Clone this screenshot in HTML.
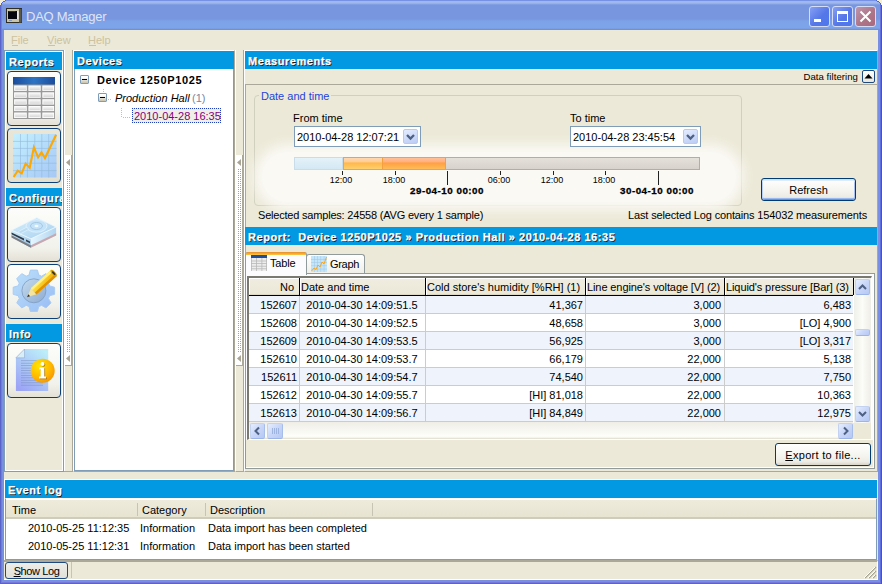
<!DOCTYPE html>
<html><head><meta charset="utf-8">
<style>
*{box-sizing:border-box;margin:0;padding:0}
html,body{width:882px;height:584px;overflow:hidden;background:#ECE9D8}
body{position:relative;font:11px "Liberation Sans",sans-serif;color:#000}
.a{position:absolute}
.t{position:absolute;white-space:pre;line-height:13px}
.hdr{position:absolute;background:#0398E2;color:#fff;font:bold 11px/1 "Liberation Sans",sans-serif;letter-spacing:0.55px;text-shadow:1px 1px 0 #1a1a1a;-webkit-text-stroke:0.25px #fff;overflow:hidden}
.hdr span{position:absolute;left:3px;top:5px;white-space:pre}
.hdr.lo span{top:5px}
.xpbtn{position:absolute;border:1px solid #003C74;border-radius:3px;background:linear-gradient(#fff 0%,#F4F3EE 60%,#ECEBE4 85%,#D8D2C6 100%)}
.sbtn{position:absolute;border:1px solid #0C3E78;border-radius:4px;background:linear-gradient(#FDFDFB,#F2F2EC 75%,#E4E1D6)}
.sbtn.sel{background:linear-gradient(#E9E6D8,#E3E0D0)}
.sarrow{position:absolute;border-radius:2px;border:1px solid #C4D2F2;border-bottom-color:#9CB4E6;border-right-color:#A8BEEA;background:linear-gradient(135deg,#E6EEFE,#C8D6F8 50%,#B6C8F4)}
</style></head><body>
<div class="a" style="left:0;top:0;width:882px;height:584px;background:#7890E0;border:1px solid #5A64C8;border-top:none"></div>
<div class="a" style="left:1px;top:30px;width:880px;height:553px;border:1px solid #7878D8;border-top:none;border-right-color:#6070D8"></div>
<div class="a" style="left:881px;top:30px;width:1px;height:554px;background:#4A50C0"></div>
<div class="a" style="left:3px;top:30px;width:876px;height:551px;background:#7890E4"></div>
<div class="a" style="left:0;top:0;width:882px;height:30px;background:linear-gradient(#4E6ADA 0px,#A0B8EE 1px,#A0B8EE 3px,#7896DF 5px,#7896DF 19px,#7DA2E8 21px,#7EA4E8 28px,#6C88DE 30px)"></div>
<div class="a" style="left:0px;top:0px;width:5px;height:1px;background:#F4EFD6"></div><div class="a" style="left:877px;top:0px;width:5px;height:1px;background:#F4EFD6"></div><div class="a" style="left:0px;top:1px;width:3px;height:1px;background:#F4EFD6"></div><div class="a" style="left:879px;top:1px;width:3px;height:1px;background:#F4EFD6"></div><div class="a" style="left:0px;top:2px;width:2px;height:1px;background:#F4EFD6"></div><div class="a" style="left:880px;top:2px;width:2px;height:1px;background:#F4EFD6"></div><div class="a" style="left:0px;top:3px;width:1px;height:1px;background:#F4EFD6"></div><div class="a" style="left:881px;top:3px;width:1px;height:1px;background:#F4EFD6"></div><div class="a" style="left:0px;top:4px;width:1px;height:1px;background:#F4EFD6"></div><div class="a" style="left:881px;top:4px;width:1px;height:1px;background:#F4EFD6"></div><div class="a" style="left:5px;top:0px;width:1px;height:1px;background:#4A66D8"></div><div class="a" style="left:876px;top:0px;width:1px;height:1px;background:#4A66D8"></div><div class="a" style="left:3px;top:1px;width:1px;height:1px;background:#4A66D8"></div><div class="a" style="left:878px;top:1px;width:1px;height:1px;background:#4A66D8"></div><div class="a" style="left:4px;top:1px;width:1px;height:1px;background:#4A66D8"></div><div class="a" style="left:877px;top:1px;width:1px;height:1px;background:#4A66D8"></div><div class="a" style="left:2px;top:2px;width:1px;height:1px;background:#4A66D8"></div><div class="a" style="left:879px;top:2px;width:1px;height:1px;background:#4A66D8"></div><div class="a" style="left:1px;top:3px;width:1px;height:1px;background:#4A66D8"></div><div class="a" style="left:880px;top:3px;width:1px;height:1px;background:#4A66D8"></div><div class="a" style="left:1px;top:4px;width:1px;height:1px;background:#4A66D8"></div><div class="a" style="left:880px;top:4px;width:1px;height:1px;background:#4A66D8"></div>
<div class="a" style="left:0;top:5px;width:1px;height:25px;background:#5A64C8"></div>
<div class="a" style="left:1px;top:5px;width:1px;height:25px;background:#7A7CD8"></div>
<div class="a" style="left:881px;top:5px;width:1px;height:25px;background:#4A50C0"></div>
<div class="a" style="left:880px;top:5px;width:1px;height:25px;background:#6A74D8"></div>
<svg class="a" style="left:6px;top:8px" width="16" height="15"><rect x="0.5" y="0.5" width="15" height="14" fill="#C9C5AA" stroke="#2E2E24"/><rect x="13" y="1" width="2.5" height="13.5" fill="#5A5848"/><rect x="2" y="3" width="9" height="8" fill="#05050E"/><rect x="2.5" y="3" width="7" height="1" fill="#1A2A8A"/><rect x="11" y="3" width="1.5" height="8" fill="#E8E8F4"/><rect x="3" y="12" width="3" height="1" fill="#7A9AC8"/></svg>
<div class="t" style="left:26px;top:10px;font:13px/1 'Liberation Sans',sans-serif;letter-spacing:-0.25px;color:#DCE6F8">DAQ Manager</div>
<div class="a" style="left:809px;top:6px;width:21px;height:21px;border:1px solid #D4DCF6;border-radius:3px;background:linear-gradient(135deg,#86A0F2,#5577E8 55%,#4D78EE)"></div>
<div class="a" style="left:832px;top:6px;width:21px;height:21px;border:1px solid #D4DCF6;border-radius:3px;background:linear-gradient(135deg,#86A0F2,#5577E8 55%,#4D78EE)"></div>
<div class="a" style="left:855px;top:6px;width:21px;height:21px;border:1px solid #D4DCF6;border-radius:3px;background:linear-gradient(135deg,#BC96AE,#AE7488 55%,#A86A7E)"></div>
<div class="a" style="left:814px;top:19px;width:7px;height:3px;background:#fff"></div>
<div class="a" style="left:837px;top:11px;width:11px;height:11px;border:1px solid #fff;border-top-width:3px"></div>
<svg class="a" style="left:855px;top:6px" width="21" height="21"><path d="M5.5 5.5 L15.5 15.5 M15.5 5.5 L5.5 15.5" stroke="#fff" stroke-width="2"/></svg>
<div class="a" style="left:4px;top:30px;width:874px;height:550px;background:#ECE9D8"></div>
<div class="t" style="left:11px;top:34px;color:#CDC29E">File</div>
<div class="a" style="left:12px;top:45px;width:6px;height:1px;background:#CDC29E"></div>
<div class="t" style="left:47px;top:34px;color:#CDC29E">View</div>
<div class="a" style="left:48px;top:45px;width:7px;height:1px;background:#CDC29E"></div>
<div class="t" style="left:88px;top:34px;color:#CDC29E">Help</div>
<div class="a" style="left:89px;top:45px;width:7px;height:1px;background:#CDC29E"></div>
<div class="a" style="left:4px;top:50px;width:60px;height:422px;border:1px solid #7F9DB9"></div>
<div class="a" style="left:5px;top:51px;width:58px;height:420px;border:1px solid #fff"></div>
<div class="hdr lo" style="left:6px;top:52px;width:56px;height:18px"><span>Reports</span></div>
<div class="hdr lo" style="left:6px;top:188px;width:56px;height:18px"><span>Configuration</span></div>
<div class="hdr lo" style="left:6px;top:324px;width:56px;height:18px"><span>Info</span></div>
<div class="sbtn" style="left:7px;top:71px;width:54px;height:55px"></div>
<div class="sbtn sel" style="left:7px;top:128px;width:54px;height:55px"></div>
<div class="sbtn" style="left:7px;top:207px;width:54px;height:55px"></div>
<div class="sbtn" style="left:7px;top:264px;width:54px;height:55px"></div>
<div class="sbtn" style="left:7px;top:343px;width:54px;height:55px"></div>
<svg class="a" style="left:0;top:0" width="70" height="400"><defs><linearGradient id="hb" x1="0" x2="1"><stop offset="0" stop-color="#1B4C9C"/><stop offset=".5" stop-color="#2E74C4"/><stop offset="1" stop-color="#1B4C9C"/></linearGradient><linearGradient id="cg" x1="0" y1="0" x2="0" y2="1"><stop offset="0" stop-color="#F6F6F6"/><stop offset="1" stop-color="#D6D6D6"/></linearGradient><linearGradient id="chbg" x1="0" y1="0" x2="1" y2="1"><stop offset="0" stop-color="#C4F0FF"/><stop offset="1" stop-color="#A6C8F6"/></linearGradient><linearGradient id="doc" x1="0.8" y1="0" x2="0.2" y2="1"><stop offset="0" stop-color="#BCEEFA"/><stop offset=".5" stop-color="#ACC8F6"/><stop offset="1" stop-color="#9CA4F6"/></linearGradient><radialGradient id="inf" cx=".35" cy=".3" r=".8"><stop offset="0" stop-color="#FFE600"/><stop offset=".6" stop-color="#FFB800"/><stop offset="1" stop-color="#F59000"/></radialGradient><linearGradient id="hddtop" x1="0" y1="0" x2="1" y2="1"><stop offset="0" stop-color="#D8F0FA"/><stop offset="1" stop-color="#A8D0F0"/></linearGradient><linearGradient id="pen" x1="0" y1="0" x2="1" y2="1"><stop offset="0" stop-color="#FFE84A"/><stop offset="1" stop-color="#F0A800"/></linearGradient></defs><rect x="13" y="77" width="42" height="8" fill="url(#hb)"/><rect x="13" y="84.5" width="42" height="34.5" fill="#999"/><rect x="14.1" y="85.5" width="12.7" height="5.4" fill="#fff"/><rect x="15.1" y="86.3" width="10.9" height="3.8" fill="url(#cg)"/><rect x="28.4" y="85.5" width="12.3" height="5.4" fill="#fff"/><rect x="29.4" y="86.3" width="10.5" height="3.8" fill="url(#cg)"/><rect x="42.3" y="85.5" width="11.8" height="5.4" fill="#fff"/><rect x="43.3" y="86.3" width="10.0" height="3.8" fill="url(#cg)"/><rect x="14.1" y="92.3" width="12.7" height="5.5" fill="#fff"/><rect x="15.1" y="93.1" width="10.9" height="3.9" fill="url(#cg)"/><rect x="28.4" y="92.3" width="12.3" height="5.5" fill="#fff"/><rect x="29.4" y="93.1" width="10.5" height="3.9" fill="url(#cg)"/><rect x="42.3" y="92.3" width="11.8" height="5.5" fill="#fff"/><rect x="43.3" y="93.1" width="10.0" height="3.9" fill="url(#cg)"/><rect x="14.1" y="99.2" width="12.7" height="5.4" fill="#fff"/><rect x="15.1" y="100.0" width="10.9" height="3.8" fill="url(#cg)"/><rect x="28.4" y="99.2" width="12.3" height="5.4" fill="#fff"/><rect x="29.4" y="100.0" width="10.5" height="3.8" fill="url(#cg)"/><rect x="42.3" y="99.2" width="11.8" height="5.4" fill="#fff"/><rect x="43.3" y="100.0" width="10.0" height="3.8" fill="url(#cg)"/><rect x="14.1" y="106.0" width="12.7" height="5.1" fill="#fff"/><rect x="15.1" y="106.8" width="10.9" height="3.5" fill="url(#cg)"/><rect x="28.4" y="106.0" width="12.3" height="5.1" fill="#fff"/><rect x="29.4" y="106.8" width="10.5" height="3.5" fill="url(#cg)"/><rect x="42.3" y="106.0" width="11.8" height="5.1" fill="#fff"/><rect x="43.3" y="106.8" width="10.0" height="3.5" fill="url(#cg)"/><rect x="14.1" y="112.5" width="12.7" height="5.5" fill="#fff"/><rect x="15.1" y="113.3" width="10.9" height="3.9" fill="url(#cg)"/><rect x="28.4" y="112.5" width="12.3" height="5.5" fill="#fff"/><rect x="29.4" y="113.3" width="10.5" height="3.9" fill="url(#cg)"/><rect x="42.3" y="112.5" width="11.8" height="5.5" fill="#fff"/><rect x="43.3" y="113.3" width="10.0" height="3.9" fill="url(#cg)"/><rect x="13" y="134" width="43.5" height="43.5" fill="url(#chbg)"/><rect x="20.0" y="134" width="1" height="43.5" fill="#8FB6D8" opacity=".55"/><rect x="26.9" y="134" width="1" height="43.5" fill="#8FB6D8" opacity=".55"/><rect x="34.3" y="134" width="1" height="43.5" fill="#8FB6D8" opacity=".55"/><rect x="41.3" y="134" width="1" height="43.5" fill="#8FB6D8" opacity=".55"/><rect x="48.2" y="134" width="1" height="43.5" fill="#8FB6D8" opacity=".55"/><rect x="13" y="140.9" width="43.5" height="1" fill="#8FB6D8" opacity=".55"/><rect x="13" y="147.9" width="43.5" height="1" fill="#8FB6D8" opacity=".55"/><rect x="13" y="155.3" width="43.5" height="1" fill="#8FB6D8" opacity=".55"/><rect x="13" y="162.7" width="43.5" height="1" fill="#8FB6D8" opacity=".55"/><rect x="13" y="170.1" width="43.5" height="1" fill="#8FB6D8" opacity=".55"/><polyline points="13.7,177 17.7,170.7 21.7,173.5 25.6,163.6 29.7,167.8 33.9,147.4 38.1,157.4 41.5,152.5 45,158 56.1,134.7" fill="none" stroke="#FFA800" stroke-width="2.1"/><defs><linearGradient id="hddl" x1="0" y1="0" x2="0" y2="1"><stop offset="0" stop-color="#D4F0FC"/><stop offset="1" stop-color="#90B8DC"/></linearGradient><linearGradient id="hddr" x1="0" y1="0" x2="1" y2="0"><stop offset="0" stop-color="#E4F6FF"/><stop offset="1" stop-color="#B0D4F0"/></linearGradient></defs><polygon points="11.5,230.1 30.9,238.8 30.9,247.8 11.5,237.4" fill="url(#hddl)"/><polygon points="30.9,238.8 56.1,227 56.1,235.6 30.9,247.8" fill="url(#hddr)"/><polygon points="30.9,245.2 56.1,233.2 56.1,235.6 30.9,247.8" fill="#C8A8B0"/><polygon points="11.5,235.2 30.9,245.4 30.9,247.8 11.5,237.4" fill="#7C7C80"/><polygon points="11.5,232.5 24,238.6 24,240.4 11.5,234.3" fill="#2E3A48"/><polygon points="26,239.6 30,241.6 30,243.2 26,241.2" fill="#2E3A48"/><polygon points="11.5,230.1 36.8,217.5 56.1,227 30.9,238.8" fill="url(#hddtop)" stroke="#F0FAFF" stroke-width=".8" stroke-linejoin="round"/><ellipse cx="36.5" cy="226" rx="10.5" ry="6.2" fill="#C4E2F8" stroke="#E8F6FF" stroke-width=".7"/><ellipse cx="36.5" cy="226" rx="6" ry="3.5" fill="none" stroke="#9CC0DC" stroke-width=".8"/><ellipse cx="36.5" cy="226" rx="2" ry="1.2" fill="#F0FAFF"/><polygon points="18.5,231.5 27,227 28.5,229.5 20,234" fill="#BCDCF2" stroke="#E8F6FF" stroke-width=".6"/><defs><linearGradient id="gear" x1="0" y1="0" x2="1" y2="1"><stop offset="0" stop-color="#BCE0FA"/><stop offset="1" stop-color="#98BCF4"/></linearGradient><linearGradient id="gearc" x1="0" y1="0" x2="1" y2="1"><stop offset="0" stop-color="#C4DCF0"/><stop offset="1" stop-color="#8EAAD0"/></linearGradient></defs><polygon points="29.02,275.04 30.35,270.10 37.45,270.10 38.78,275.04 41.60,276.21 46.02,273.65 51.05,278.68 48.49,283.10 49.66,285.92 54.60,287.25 54.60,294.35 49.66,295.68 48.49,298.50 51.05,302.92 46.02,307.95 41.60,305.39 38.78,306.56 37.45,311.50 30.35,311.50 29.02,306.56 26.20,305.39 21.78,307.95 16.75,302.92 19.31,298.50 18.14,295.68 13.20,294.35 13.20,287.25 18.14,285.92 19.31,283.10 16.75,278.68 21.78,273.65 26.20,276.21" fill="url(#gear)" stroke="#A8CCF4" stroke-width="1" stroke-linejoin="round"/><circle cx="33.9" cy="290.8" r="12" fill="url(#gearc)" stroke="#7E9CC0" stroke-width=".8"/><g transform="translate(27,297.3) rotate(-42.1)"><polygon points="0,0 9,-4 9,4" fill="#F4E4A0"/><polygon points="0,0 3,-1.3 3,1.3" fill="#333"/><rect x="9" y="-4.2" width="27" height="8.4" fill="url(#pen)"/><rect x="9" y="-4.2" width="27" height="2.5" fill="#FFF080"/><rect x="9" y="1.8" width="27" height="2.4" fill="#E09000"/><ellipse cx="36" cy="0" rx="1.8" ry="4.2" fill="#D8A000"/><ellipse cx="36" cy="0" rx="1" ry="2.4" fill="#333"/></g><polygon points="24.5,349 48.2,349 48.2,391.1 15.9,391.1 15.9,357.8" fill="url(#doc)"/><polygon points="15.9,357.8 24.5,349 24.5,357.8" fill="#D8EEF8" stroke="#8AA4C8" stroke-width=".5"/><rect x="21" y="360.3" width="22" height="0.8" fill="#7A8EC0" opacity=".65"/><rect x="21" y="362.8" width="22" height="0.8" fill="#7A8EC0" opacity=".65"/><rect x="21" y="365.2" width="22" height="0.8" fill="#7A8EC0" opacity=".65"/><rect x="21" y="367.7" width="22" height="0.8" fill="#7A8EC0" opacity=".65"/><rect x="21" y="370.1" width="22" height="0.8" fill="#7A8EC0" opacity=".65"/><rect x="21" y="372.6" width="22" height="0.8" fill="#7A8EC0" opacity=".65"/><rect x="21" y="375.0" width="22" height="0.8" fill="#7A8EC0" opacity=".65"/><rect x="21" y="377.4" width="22" height="0.8" fill="#7A8EC0" opacity=".65"/><rect x="21" y="379.9" width="22" height="0.8" fill="#7A8EC0" opacity=".65"/><rect x="21" y="382.4" width="22" height="0.8" fill="#7A8EC0" opacity=".65"/><rect x="21" y="384.8" width="22" height="0.8" fill="#7A8EC0" opacity=".65"/><circle cx="42.7" cy="370.8" r="12" fill="url(#inf)"/><path d="M40.3,368.3 h4.8 v9 h1.8 v2 h-7 v-2 h1.6 v-7 h-1.2z" fill="#7A4A00" opacity=".6"/><circle cx="43.3" cy="364.8" r="2" fill="#7A4A00" opacity=".6"/><path d="M39.5,367.5 h4.8 v9 h1.8 v2 h-7 v-2 h1.6 v-7 h-1.2z" fill="#fff"/><circle cx="42.5" cy="364" r="2" fill="#fff"/></svg>
<div class="a" style="left:65px;top:155px;width:7px;height:211px;background:#fff;border-right:1px solid #ACA899;border-bottom:1px solid #ACA899"></div>
<svg class="a" style="left:65px;top:155px" width="7" height="211"><polygon points="1,7.5 5,4 5,11" fill="#A8A594"/><polygon points="1,203.5 5,200 5,207" fill="#A8A594"/><rect x="2" y="14" width="1" height="1" fill="#A8A594"/><rect x="4" y="14" width="1" height="1" fill="#A8A594"/><rect x="2" y="16" width="1" height="1" fill="#A8A594"/><rect x="4" y="16" width="1" height="1" fill="#A8A594"/><rect x="2" y="18" width="1" height="1" fill="#A8A594"/><rect x="4" y="18" width="1" height="1" fill="#A8A594"/><rect x="2" y="20" width="1" height="1" fill="#A8A594"/><rect x="4" y="20" width="1" height="1" fill="#A8A594"/><rect x="2" y="22" width="1" height="1" fill="#A8A594"/><rect x="4" y="22" width="1" height="1" fill="#A8A594"/><rect x="2" y="24" width="1" height="1" fill="#A8A594"/><rect x="4" y="24" width="1" height="1" fill="#A8A594"/><rect x="2" y="26" width="1" height="1" fill="#A8A594"/><rect x="4" y="26" width="1" height="1" fill="#A8A594"/><rect x="2" y="28" width="1" height="1" fill="#A8A594"/><rect x="4" y="28" width="1" height="1" fill="#A8A594"/><rect x="2" y="30" width="1" height="1" fill="#A8A594"/><rect x="4" y="30" width="1" height="1" fill="#A8A594"/><rect x="2" y="32" width="1" height="1" fill="#A8A594"/><rect x="4" y="32" width="1" height="1" fill="#A8A594"/><rect x="2" y="34" width="1" height="1" fill="#A8A594"/><rect x="4" y="34" width="1" height="1" fill="#A8A594"/><rect x="2" y="36" width="1" height="1" fill="#A8A594"/><rect x="4" y="36" width="1" height="1" fill="#A8A594"/><rect x="2" y="38" width="1" height="1" fill="#A8A594"/><rect x="4" y="38" width="1" height="1" fill="#A8A594"/><rect x="2" y="40" width="1" height="1" fill="#A8A594"/><rect x="4" y="40" width="1" height="1" fill="#A8A594"/><rect x="2" y="42" width="1" height="1" fill="#A8A594"/><rect x="4" y="42" width="1" height="1" fill="#A8A594"/><rect x="2" y="44" width="1" height="1" fill="#A8A594"/><rect x="4" y="44" width="1" height="1" fill="#A8A594"/><rect x="2" y="46" width="1" height="1" fill="#A8A594"/><rect x="4" y="46" width="1" height="1" fill="#A8A594"/><rect x="2" y="48" width="1" height="1" fill="#A8A594"/><rect x="4" y="48" width="1" height="1" fill="#A8A594"/><rect x="2" y="50" width="1" height="1" fill="#A8A594"/><rect x="4" y="50" width="1" height="1" fill="#A8A594"/><rect x="2" y="52" width="1" height="1" fill="#A8A594"/><rect x="4" y="52" width="1" height="1" fill="#A8A594"/><rect x="2" y="54" width="1" height="1" fill="#A8A594"/><rect x="4" y="54" width="1" height="1" fill="#A8A594"/><rect x="2" y="56" width="1" height="1" fill="#A8A594"/><rect x="4" y="56" width="1" height="1" fill="#A8A594"/><rect x="2" y="58" width="1" height="1" fill="#A8A594"/><rect x="4" y="58" width="1" height="1" fill="#A8A594"/><rect x="2" y="60" width="1" height="1" fill="#A8A594"/><rect x="4" y="60" width="1" height="1" fill="#A8A594"/><rect x="2" y="62" width="1" height="1" fill="#A8A594"/><rect x="4" y="62" width="1" height="1" fill="#A8A594"/><rect x="2" y="64" width="1" height="1" fill="#A8A594"/><rect x="4" y="64" width="1" height="1" fill="#A8A594"/><rect x="2" y="66" width="1" height="1" fill="#A8A594"/><rect x="4" y="66" width="1" height="1" fill="#A8A594"/><rect x="2" y="68" width="1" height="1" fill="#A8A594"/><rect x="4" y="68" width="1" height="1" fill="#A8A594"/><rect x="2" y="70" width="1" height="1" fill="#A8A594"/><rect x="4" y="70" width="1" height="1" fill="#A8A594"/><rect x="2" y="72" width="1" height="1" fill="#A8A594"/><rect x="4" y="72" width="1" height="1" fill="#A8A594"/><rect x="2" y="74" width="1" height="1" fill="#A8A594"/><rect x="4" y="74" width="1" height="1" fill="#A8A594"/><rect x="2" y="76" width="1" height="1" fill="#A8A594"/><rect x="4" y="76" width="1" height="1" fill="#A8A594"/><rect x="2" y="78" width="1" height="1" fill="#A8A594"/><rect x="4" y="78" width="1" height="1" fill="#A8A594"/><rect x="2" y="80" width="1" height="1" fill="#A8A594"/><rect x="4" y="80" width="1" height="1" fill="#A8A594"/><rect x="2" y="82" width="1" height="1" fill="#A8A594"/><rect x="4" y="82" width="1" height="1" fill="#A8A594"/><rect x="2" y="84" width="1" height="1" fill="#A8A594"/><rect x="4" y="84" width="1" height="1" fill="#A8A594"/><rect x="2" y="86" width="1" height="1" fill="#A8A594"/><rect x="4" y="86" width="1" height="1" fill="#A8A594"/><rect x="2" y="88" width="1" height="1" fill="#A8A594"/><rect x="4" y="88" width="1" height="1" fill="#A8A594"/><rect x="2" y="90" width="1" height="1" fill="#A8A594"/><rect x="4" y="90" width="1" height="1" fill="#A8A594"/><rect x="2" y="92" width="1" height="1" fill="#A8A594"/><rect x="4" y="92" width="1" height="1" fill="#A8A594"/><rect x="2" y="94" width="1" height="1" fill="#A8A594"/><rect x="4" y="94" width="1" height="1" fill="#A8A594"/><rect x="2" y="96" width="1" height="1" fill="#A8A594"/><rect x="4" y="96" width="1" height="1" fill="#A8A594"/><rect x="2" y="98" width="1" height="1" fill="#A8A594"/><rect x="4" y="98" width="1" height="1" fill="#A8A594"/><rect x="2" y="100" width="1" height="1" fill="#A8A594"/><rect x="4" y="100" width="1" height="1" fill="#A8A594"/><rect x="2" y="102" width="1" height="1" fill="#A8A594"/><rect x="4" y="102" width="1" height="1" fill="#A8A594"/><rect x="2" y="104" width="1" height="1" fill="#A8A594"/><rect x="4" y="104" width="1" height="1" fill="#A8A594"/><rect x="2" y="106" width="1" height="1" fill="#A8A594"/><rect x="4" y="106" width="1" height="1" fill="#A8A594"/><rect x="2" y="108" width="1" height="1" fill="#A8A594"/><rect x="4" y="108" width="1" height="1" fill="#A8A594"/><rect x="2" y="110" width="1" height="1" fill="#A8A594"/><rect x="4" y="110" width="1" height="1" fill="#A8A594"/><rect x="2" y="112" width="1" height="1" fill="#A8A594"/><rect x="4" y="112" width="1" height="1" fill="#A8A594"/><rect x="2" y="114" width="1" height="1" fill="#A8A594"/><rect x="4" y="114" width="1" height="1" fill="#A8A594"/><rect x="2" y="116" width="1" height="1" fill="#A8A594"/><rect x="4" y="116" width="1" height="1" fill="#A8A594"/><rect x="2" y="118" width="1" height="1" fill="#A8A594"/><rect x="4" y="118" width="1" height="1" fill="#A8A594"/><rect x="2" y="120" width="1" height="1" fill="#A8A594"/><rect x="4" y="120" width="1" height="1" fill="#A8A594"/><rect x="2" y="122" width="1" height="1" fill="#A8A594"/><rect x="4" y="122" width="1" height="1" fill="#A8A594"/><rect x="2" y="124" width="1" height="1" fill="#A8A594"/><rect x="4" y="124" width="1" height="1" fill="#A8A594"/><rect x="2" y="126" width="1" height="1" fill="#A8A594"/><rect x="4" y="126" width="1" height="1" fill="#A8A594"/><rect x="2" y="128" width="1" height="1" fill="#A8A594"/><rect x="4" y="128" width="1" height="1" fill="#A8A594"/><rect x="2" y="130" width="1" height="1" fill="#A8A594"/><rect x="4" y="130" width="1" height="1" fill="#A8A594"/><rect x="2" y="132" width="1" height="1" fill="#A8A594"/><rect x="4" y="132" width="1" height="1" fill="#A8A594"/><rect x="2" y="134" width="1" height="1" fill="#A8A594"/><rect x="4" y="134" width="1" height="1" fill="#A8A594"/><rect x="2" y="136" width="1" height="1" fill="#A8A594"/><rect x="4" y="136" width="1" height="1" fill="#A8A594"/><rect x="2" y="138" width="1" height="1" fill="#A8A594"/><rect x="4" y="138" width="1" height="1" fill="#A8A594"/><rect x="2" y="140" width="1" height="1" fill="#A8A594"/><rect x="4" y="140" width="1" height="1" fill="#A8A594"/><rect x="2" y="142" width="1" height="1" fill="#A8A594"/><rect x="4" y="142" width="1" height="1" fill="#A8A594"/><rect x="2" y="144" width="1" height="1" fill="#A8A594"/><rect x="4" y="144" width="1" height="1" fill="#A8A594"/><rect x="2" y="146" width="1" height="1" fill="#A8A594"/><rect x="4" y="146" width="1" height="1" fill="#A8A594"/><rect x="2" y="148" width="1" height="1" fill="#A8A594"/><rect x="4" y="148" width="1" height="1" fill="#A8A594"/><rect x="2" y="150" width="1" height="1" fill="#A8A594"/><rect x="4" y="150" width="1" height="1" fill="#A8A594"/><rect x="2" y="152" width="1" height="1" fill="#A8A594"/><rect x="4" y="152" width="1" height="1" fill="#A8A594"/><rect x="2" y="154" width="1" height="1" fill="#A8A594"/><rect x="4" y="154" width="1" height="1" fill="#A8A594"/><rect x="2" y="156" width="1" height="1" fill="#A8A594"/><rect x="4" y="156" width="1" height="1" fill="#A8A594"/><rect x="2" y="158" width="1" height="1" fill="#A8A594"/><rect x="4" y="158" width="1" height="1" fill="#A8A594"/><rect x="2" y="160" width="1" height="1" fill="#A8A594"/><rect x="4" y="160" width="1" height="1" fill="#A8A594"/><rect x="2" y="162" width="1" height="1" fill="#A8A594"/><rect x="4" y="162" width="1" height="1" fill="#A8A594"/><rect x="2" y="164" width="1" height="1" fill="#A8A594"/><rect x="4" y="164" width="1" height="1" fill="#A8A594"/><rect x="2" y="166" width="1" height="1" fill="#A8A594"/><rect x="4" y="166" width="1" height="1" fill="#A8A594"/><rect x="2" y="168" width="1" height="1" fill="#A8A594"/><rect x="4" y="168" width="1" height="1" fill="#A8A594"/><rect x="2" y="170" width="1" height="1" fill="#A8A594"/><rect x="4" y="170" width="1" height="1" fill="#A8A594"/><rect x="2" y="172" width="1" height="1" fill="#A8A594"/><rect x="4" y="172" width="1" height="1" fill="#A8A594"/><rect x="2" y="174" width="1" height="1" fill="#A8A594"/><rect x="4" y="174" width="1" height="1" fill="#A8A594"/><rect x="2" y="176" width="1" height="1" fill="#A8A594"/><rect x="4" y="176" width="1" height="1" fill="#A8A594"/><rect x="2" y="178" width="1" height="1" fill="#A8A594"/><rect x="4" y="178" width="1" height="1" fill="#A8A594"/><rect x="2" y="180" width="1" height="1" fill="#A8A594"/><rect x="4" y="180" width="1" height="1" fill="#A8A594"/><rect x="2" y="182" width="1" height="1" fill="#A8A594"/><rect x="4" y="182" width="1" height="1" fill="#A8A594"/><rect x="2" y="184" width="1" height="1" fill="#A8A594"/><rect x="4" y="184" width="1" height="1" fill="#A8A594"/><rect x="2" y="186" width="1" height="1" fill="#A8A594"/><rect x="4" y="186" width="1" height="1" fill="#A8A594"/><rect x="2" y="188" width="1" height="1" fill="#A8A594"/><rect x="4" y="188" width="1" height="1" fill="#A8A594"/><rect x="2" y="190" width="1" height="1" fill="#A8A594"/><rect x="4" y="190" width="1" height="1" fill="#A8A594"/><rect x="2" y="192" width="1" height="1" fill="#A8A594"/><rect x="4" y="192" width="1" height="1" fill="#A8A594"/><rect x="2" y="194" width="1" height="1" fill="#A8A594"/><rect x="4" y="194" width="1" height="1" fill="#A8A594"/><rect x="2" y="196" width="1" height="1" fill="#A8A594"/><rect x="4" y="196" width="1" height="1" fill="#A8A594"/></svg>
<div class="a" style="left:236px;top:155px;width:7px;height:211px;background:#fff;border-right:1px solid #ACA899;border-bottom:1px solid #ACA899"></div>
<svg class="a" style="left:236px;top:155px" width="7" height="211"><polygon points="1,7.5 5,4 5,11" fill="#A8A594"/><polygon points="1,203.5 5,200 5,207" fill="#A8A594"/><rect x="2" y="14" width="1" height="1" fill="#A8A594"/><rect x="4" y="14" width="1" height="1" fill="#A8A594"/><rect x="2" y="16" width="1" height="1" fill="#A8A594"/><rect x="4" y="16" width="1" height="1" fill="#A8A594"/><rect x="2" y="18" width="1" height="1" fill="#A8A594"/><rect x="4" y="18" width="1" height="1" fill="#A8A594"/><rect x="2" y="20" width="1" height="1" fill="#A8A594"/><rect x="4" y="20" width="1" height="1" fill="#A8A594"/><rect x="2" y="22" width="1" height="1" fill="#A8A594"/><rect x="4" y="22" width="1" height="1" fill="#A8A594"/><rect x="2" y="24" width="1" height="1" fill="#A8A594"/><rect x="4" y="24" width="1" height="1" fill="#A8A594"/><rect x="2" y="26" width="1" height="1" fill="#A8A594"/><rect x="4" y="26" width="1" height="1" fill="#A8A594"/><rect x="2" y="28" width="1" height="1" fill="#A8A594"/><rect x="4" y="28" width="1" height="1" fill="#A8A594"/><rect x="2" y="30" width="1" height="1" fill="#A8A594"/><rect x="4" y="30" width="1" height="1" fill="#A8A594"/><rect x="2" y="32" width="1" height="1" fill="#A8A594"/><rect x="4" y="32" width="1" height="1" fill="#A8A594"/><rect x="2" y="34" width="1" height="1" fill="#A8A594"/><rect x="4" y="34" width="1" height="1" fill="#A8A594"/><rect x="2" y="36" width="1" height="1" fill="#A8A594"/><rect x="4" y="36" width="1" height="1" fill="#A8A594"/><rect x="2" y="38" width="1" height="1" fill="#A8A594"/><rect x="4" y="38" width="1" height="1" fill="#A8A594"/><rect x="2" y="40" width="1" height="1" fill="#A8A594"/><rect x="4" y="40" width="1" height="1" fill="#A8A594"/><rect x="2" y="42" width="1" height="1" fill="#A8A594"/><rect x="4" y="42" width="1" height="1" fill="#A8A594"/><rect x="2" y="44" width="1" height="1" fill="#A8A594"/><rect x="4" y="44" width="1" height="1" fill="#A8A594"/><rect x="2" y="46" width="1" height="1" fill="#A8A594"/><rect x="4" y="46" width="1" height="1" fill="#A8A594"/><rect x="2" y="48" width="1" height="1" fill="#A8A594"/><rect x="4" y="48" width="1" height="1" fill="#A8A594"/><rect x="2" y="50" width="1" height="1" fill="#A8A594"/><rect x="4" y="50" width="1" height="1" fill="#A8A594"/><rect x="2" y="52" width="1" height="1" fill="#A8A594"/><rect x="4" y="52" width="1" height="1" fill="#A8A594"/><rect x="2" y="54" width="1" height="1" fill="#A8A594"/><rect x="4" y="54" width="1" height="1" fill="#A8A594"/><rect x="2" y="56" width="1" height="1" fill="#A8A594"/><rect x="4" y="56" width="1" height="1" fill="#A8A594"/><rect x="2" y="58" width="1" height="1" fill="#A8A594"/><rect x="4" y="58" width="1" height="1" fill="#A8A594"/><rect x="2" y="60" width="1" height="1" fill="#A8A594"/><rect x="4" y="60" width="1" height="1" fill="#A8A594"/><rect x="2" y="62" width="1" height="1" fill="#A8A594"/><rect x="4" y="62" width="1" height="1" fill="#A8A594"/><rect x="2" y="64" width="1" height="1" fill="#A8A594"/><rect x="4" y="64" width="1" height="1" fill="#A8A594"/><rect x="2" y="66" width="1" height="1" fill="#A8A594"/><rect x="4" y="66" width="1" height="1" fill="#A8A594"/><rect x="2" y="68" width="1" height="1" fill="#A8A594"/><rect x="4" y="68" width="1" height="1" fill="#A8A594"/><rect x="2" y="70" width="1" height="1" fill="#A8A594"/><rect x="4" y="70" width="1" height="1" fill="#A8A594"/><rect x="2" y="72" width="1" height="1" fill="#A8A594"/><rect x="4" y="72" width="1" height="1" fill="#A8A594"/><rect x="2" y="74" width="1" height="1" fill="#A8A594"/><rect x="4" y="74" width="1" height="1" fill="#A8A594"/><rect x="2" y="76" width="1" height="1" fill="#A8A594"/><rect x="4" y="76" width="1" height="1" fill="#A8A594"/><rect x="2" y="78" width="1" height="1" fill="#A8A594"/><rect x="4" y="78" width="1" height="1" fill="#A8A594"/><rect x="2" y="80" width="1" height="1" fill="#A8A594"/><rect x="4" y="80" width="1" height="1" fill="#A8A594"/><rect x="2" y="82" width="1" height="1" fill="#A8A594"/><rect x="4" y="82" width="1" height="1" fill="#A8A594"/><rect x="2" y="84" width="1" height="1" fill="#A8A594"/><rect x="4" y="84" width="1" height="1" fill="#A8A594"/><rect x="2" y="86" width="1" height="1" fill="#A8A594"/><rect x="4" y="86" width="1" height="1" fill="#A8A594"/><rect x="2" y="88" width="1" height="1" fill="#A8A594"/><rect x="4" y="88" width="1" height="1" fill="#A8A594"/><rect x="2" y="90" width="1" height="1" fill="#A8A594"/><rect x="4" y="90" width="1" height="1" fill="#A8A594"/><rect x="2" y="92" width="1" height="1" fill="#A8A594"/><rect x="4" y="92" width="1" height="1" fill="#A8A594"/><rect x="2" y="94" width="1" height="1" fill="#A8A594"/><rect x="4" y="94" width="1" height="1" fill="#A8A594"/><rect x="2" y="96" width="1" height="1" fill="#A8A594"/><rect x="4" y="96" width="1" height="1" fill="#A8A594"/><rect x="2" y="98" width="1" height="1" fill="#A8A594"/><rect x="4" y="98" width="1" height="1" fill="#A8A594"/><rect x="2" y="100" width="1" height="1" fill="#A8A594"/><rect x="4" y="100" width="1" height="1" fill="#A8A594"/><rect x="2" y="102" width="1" height="1" fill="#A8A594"/><rect x="4" y="102" width="1" height="1" fill="#A8A594"/><rect x="2" y="104" width="1" height="1" fill="#A8A594"/><rect x="4" y="104" width="1" height="1" fill="#A8A594"/><rect x="2" y="106" width="1" height="1" fill="#A8A594"/><rect x="4" y="106" width="1" height="1" fill="#A8A594"/><rect x="2" y="108" width="1" height="1" fill="#A8A594"/><rect x="4" y="108" width="1" height="1" fill="#A8A594"/><rect x="2" y="110" width="1" height="1" fill="#A8A594"/><rect x="4" y="110" width="1" height="1" fill="#A8A594"/><rect x="2" y="112" width="1" height="1" fill="#A8A594"/><rect x="4" y="112" width="1" height="1" fill="#A8A594"/><rect x="2" y="114" width="1" height="1" fill="#A8A594"/><rect x="4" y="114" width="1" height="1" fill="#A8A594"/><rect x="2" y="116" width="1" height="1" fill="#A8A594"/><rect x="4" y="116" width="1" height="1" fill="#A8A594"/><rect x="2" y="118" width="1" height="1" fill="#A8A594"/><rect x="4" y="118" width="1" height="1" fill="#A8A594"/><rect x="2" y="120" width="1" height="1" fill="#A8A594"/><rect x="4" y="120" width="1" height="1" fill="#A8A594"/><rect x="2" y="122" width="1" height="1" fill="#A8A594"/><rect x="4" y="122" width="1" height="1" fill="#A8A594"/><rect x="2" y="124" width="1" height="1" fill="#A8A594"/><rect x="4" y="124" width="1" height="1" fill="#A8A594"/><rect x="2" y="126" width="1" height="1" fill="#A8A594"/><rect x="4" y="126" width="1" height="1" fill="#A8A594"/><rect x="2" y="128" width="1" height="1" fill="#A8A594"/><rect x="4" y="128" width="1" height="1" fill="#A8A594"/><rect x="2" y="130" width="1" height="1" fill="#A8A594"/><rect x="4" y="130" width="1" height="1" fill="#A8A594"/><rect x="2" y="132" width="1" height="1" fill="#A8A594"/><rect x="4" y="132" width="1" height="1" fill="#A8A594"/><rect x="2" y="134" width="1" height="1" fill="#A8A594"/><rect x="4" y="134" width="1" height="1" fill="#A8A594"/><rect x="2" y="136" width="1" height="1" fill="#A8A594"/><rect x="4" y="136" width="1" height="1" fill="#A8A594"/><rect x="2" y="138" width="1" height="1" fill="#A8A594"/><rect x="4" y="138" width="1" height="1" fill="#A8A594"/><rect x="2" y="140" width="1" height="1" fill="#A8A594"/><rect x="4" y="140" width="1" height="1" fill="#A8A594"/><rect x="2" y="142" width="1" height="1" fill="#A8A594"/><rect x="4" y="142" width="1" height="1" fill="#A8A594"/><rect x="2" y="144" width="1" height="1" fill="#A8A594"/><rect x="4" y="144" width="1" height="1" fill="#A8A594"/><rect x="2" y="146" width="1" height="1" fill="#A8A594"/><rect x="4" y="146" width="1" height="1" fill="#A8A594"/><rect x="2" y="148" width="1" height="1" fill="#A8A594"/><rect x="4" y="148" width="1" height="1" fill="#A8A594"/><rect x="2" y="150" width="1" height="1" fill="#A8A594"/><rect x="4" y="150" width="1" height="1" fill="#A8A594"/><rect x="2" y="152" width="1" height="1" fill="#A8A594"/><rect x="4" y="152" width="1" height="1" fill="#A8A594"/><rect x="2" y="154" width="1" height="1" fill="#A8A594"/><rect x="4" y="154" width="1" height="1" fill="#A8A594"/><rect x="2" y="156" width="1" height="1" fill="#A8A594"/><rect x="4" y="156" width="1" height="1" fill="#A8A594"/><rect x="2" y="158" width="1" height="1" fill="#A8A594"/><rect x="4" y="158" width="1" height="1" fill="#A8A594"/><rect x="2" y="160" width="1" height="1" fill="#A8A594"/><rect x="4" y="160" width="1" height="1" fill="#A8A594"/><rect x="2" y="162" width="1" height="1" fill="#A8A594"/><rect x="4" y="162" width="1" height="1" fill="#A8A594"/><rect x="2" y="164" width="1" height="1" fill="#A8A594"/><rect x="4" y="164" width="1" height="1" fill="#A8A594"/><rect x="2" y="166" width="1" height="1" fill="#A8A594"/><rect x="4" y="166" width="1" height="1" fill="#A8A594"/><rect x="2" y="168" width="1" height="1" fill="#A8A594"/><rect x="4" y="168" width="1" height="1" fill="#A8A594"/><rect x="2" y="170" width="1" height="1" fill="#A8A594"/><rect x="4" y="170" width="1" height="1" fill="#A8A594"/><rect x="2" y="172" width="1" height="1" fill="#A8A594"/><rect x="4" y="172" width="1" height="1" fill="#A8A594"/><rect x="2" y="174" width="1" height="1" fill="#A8A594"/><rect x="4" y="174" width="1" height="1" fill="#A8A594"/><rect x="2" y="176" width="1" height="1" fill="#A8A594"/><rect x="4" y="176" width="1" height="1" fill="#A8A594"/><rect x="2" y="178" width="1" height="1" fill="#A8A594"/><rect x="4" y="178" width="1" height="1" fill="#A8A594"/><rect x="2" y="180" width="1" height="1" fill="#A8A594"/><rect x="4" y="180" width="1" height="1" fill="#A8A594"/><rect x="2" y="182" width="1" height="1" fill="#A8A594"/><rect x="4" y="182" width="1" height="1" fill="#A8A594"/><rect x="2" y="184" width="1" height="1" fill="#A8A594"/><rect x="4" y="184" width="1" height="1" fill="#A8A594"/><rect x="2" y="186" width="1" height="1" fill="#A8A594"/><rect x="4" y="186" width="1" height="1" fill="#A8A594"/><rect x="2" y="188" width="1" height="1" fill="#A8A594"/><rect x="4" y="188" width="1" height="1" fill="#A8A594"/><rect x="2" y="190" width="1" height="1" fill="#A8A594"/><rect x="4" y="190" width="1" height="1" fill="#A8A594"/><rect x="2" y="192" width="1" height="1" fill="#A8A594"/><rect x="4" y="192" width="1" height="1" fill="#A8A594"/><rect x="2" y="194" width="1" height="1" fill="#A8A594"/><rect x="4" y="194" width="1" height="1" fill="#A8A594"/><rect x="2" y="196" width="1" height="1" fill="#A8A594"/><rect x="4" y="196" width="1" height="1" fill="#A8A594"/></svg>
<div class="a" style="left:64px;top:50px;width:1px;height:422px;background:#fff"></div>
<div class="a" style="left:64px;top:471px;width:9px;height:1px;background:#ACA899"></div>
<div class="a" style="left:72px;top:50px;width:1px;height:422px;background:#ACA899"></div>
<div class="a" style="left:235px;top:50px;width:9px;height:422px;border-left:1px solid #fff;border-right:1px solid #ACA899;border-bottom:1px solid #ACA899"></div>
<div class="a" style="left:73px;top:50px;width:162px;height:422px;border:1px solid #fff;border-right-color:#ACA899;border-bottom-color:#ACA899"></div>
<div class="a" style="left:74px;top:51px;width:160px;height:420px;border:1px solid #7F9DB9;background:#fff"></div>
<div class="hdr" style="left:74px;top:51px;width:160px;height:18px"><span>Devices</span></div>
<div class="a" style="left:80px;top:75px;width:9px;height:9px;border:1px solid #7F9DB9;border-radius:1px;background:linear-gradient(#fff 20%,#C9C3AC)"></div>
<div class="a" style="left:82px;top:79px;width:5px;height:1px;background:#000"></div>
<div class="a" style="left:98px;top:93px;width:9px;height:9px;border:1px solid #7F9DB9;border-radius:1px;background:linear-gradient(#fff 20%,#C9C3AC)"></div>
<div class="a" style="left:100px;top:97px;width:5px;height:1px;background:#000"></div>
<div class="t" style="top:75px;font:normal bold 11px/1 'Liberation Sans',sans-serif;color:#000;letter-spacing:0.65px;left:97px;">Device 1250P1025</div>
<div class="t" style="top:93px;font:italic normal 11px/1 'Liberation Sans',sans-serif;color:#000;left:115px;">Production Hall</div>
<div class="t" style="top:93px;font:normal normal 11px/1 'Liberation Sans',sans-serif;color:#7A88A0;left:192px;">(1)</div>
<div class="a" style="left:103px;top:89px;width:1px;height:1px;background:#C8C0A0"></div><div class="a" style="left:103px;top:91px;width:1px;height:1px;background:#C8C0A0"></div><div class="a" style="left:108px;top:99px;width:1px;height:1px;background:#C8C0A0"></div><div class="a" style="left:110px;top:99px;width:1px;height:1px;background:#C8C0A0"></div><div class="a" style="left:121px;top:108px;width:1px;height:1px;background:#C8C0A0"></div><div class="a" style="left:121px;top:110px;width:1px;height:1px;background:#C8C0A0"></div><div class="a" style="left:121px;top:112px;width:1px;height:1px;background:#C8C0A0"></div><div class="a" style="left:121px;top:114px;width:1px;height:1px;background:#C8C0A0"></div><div class="a" style="left:121px;top:116px;width:1px;height:1px;background:#C8C0A0"></div><div class="a" style="left:123px;top:117px;width:1px;height:1px;background:#C8C0A0"></div><div class="a" style="left:125px;top:117px;width:1px;height:1px;background:#C8C0A0"></div><div class="a" style="left:127px;top:117px;width:1px;height:1px;background:#C8C0A0"></div><div class="a" style="left:129px;top:117px;width:1px;height:1px;background:#C8C0A0"></div>
<div class="a" style="left:132px;top:108px;width:89px;height:15px;border:1px dotted #1F3FBF;background:#F0EEE6"></div>
<div class="t" style="top:111px;font:normal normal 11px/1 'Liberation Sans',sans-serif;color:#800080;left:134px;">2010-04-28 16:35</div>
<div class="a" style="left:244px;top:50px;width:634px;height:422px;border:1px solid #fff;border-right-color:#ACA899;border-bottom-color:#ACA899"></div>
<div class="hdr" style="left:245px;top:51px;width:632px;height:18px"><span>Measurements</span></div>
<div class="t" style="top:72px;right:24px;font:9.6px/1 'Liberation Sans',sans-serif;letter-spacing:0.05px">Data filtering</div>
<div class="a" style="left:862px;top:70px;width:13px;height:13px;border:1px solid #1F4A7F;border-radius:2px;background:linear-gradient(#fff,#E8E6DC)"></div>
<svg class="a" style="left:862px;top:70px" width="13" height="13"><polygon points="2.5,8.5 6.5,4 10.5,8.5" fill="#000"/></svg>
<div class="a" style="left:245px;top:84px;width:632px;height:385px;border-top:1px solid #ACA899;border-left:1px solid #ACA899"></div>
<div class="a" style="left:254px;top:95px;width:488px;height:111px;border:1px solid #D0D0BF;border-radius:4px"></div>
<div class="a" style="left:259px;top:90px;width:72px;height:12px;background:#ECE9D8"></div>
<div class="t" style="top:91px;font:normal normal 11px/1 'Liberation Sans',sans-serif;color:#1D44DB;left:261px;">Date and time</div>
<div class="a" style="left:262px;top:152px;width:474px;height:50px;border-radius:25px;background:#FAF9F4;box-shadow:0 0 12px 8px #FAF9F4"></div>
<div class="t" style="top:113px;font:normal normal 11px/1 'Liberation Sans',sans-serif;color:#000;left:293px;">From time</div>
<div class="t" style="top:113px;font:normal normal 11px/1 'Liberation Sans',sans-serif;color:#000;left:570px;">To time</div>
<div class="a" style="left:294px;top:126px;width:127px;height:21px;border:1px solid #7F9DB9;background:#fff"></div>
<div class="t" style="top:132px;font:normal normal 11px/1 'Liberation Sans',sans-serif;color:#000;left:297px;">2010-04-28 12:07:21</div>
<div class="a" style="left:403px;top:129px;width:15px;height:15px;border:1px solid #B9C9EF;border-radius:2px;background:linear-gradient(160deg,#E4ECFE,#BACBF5)"></div>
<svg class="a" style="left:403px;top:129px" width="15" height="15"><path d="M4 6 L7.5 9.5 L11 6" stroke="#4D6185" stroke-width="2.3" fill="none"/></svg>
<div class="a" style="left:570px;top:126px;width:131px;height:21px;border:1px solid #7F9DB9;background:#fff"></div>
<div class="t" style="top:132px;font:normal normal 11px/1 'Liberation Sans',sans-serif;color:#000;left:573px;">2010-04-28 23:45:54</div>
<div class="a" style="left:683px;top:129px;width:15px;height:15px;border:1px solid #B9C9EF;border-radius:2px;background:linear-gradient(160deg,#E4ECFE,#BACBF5)"></div>
<svg class="a" style="left:683px;top:129px" width="15" height="15"><path d="M4 6 L7.5 9.5 L11 6" stroke="#4D6185" stroke-width="2.3" fill="none"/></svg>
<div class="a" style="left:294px;top:157px;width:406px;height:13px;border:1px solid #F4A040;background:linear-gradient(#E4E0DA,#D8D2CC)"></div>
<div class="a" style="left:294px;top:157px;width:49px;height:13px;border:1px solid #C8DCEA;background:linear-gradient(#E4F2FA,#D4E8F4)"></div>
<div class="a" style="left:343px;top:157px;width:40px;height:13px;border:1px solid #F4A040;background:linear-gradient(#FFD8B0 0,#FFCC98 35%,#FFB848 45%,#FFD070 100%)"></div>
<div class="a" style="left:382px;top:157px;width:64px;height:13px;border:1px solid #F4A040;background:linear-gradient(#FFC098 0,#FFB080 35%,#FFA040 45%,#FFBC58 100%)"></div>
<div class="a" style="left:342px;top:171px;width:1px;height:4px;background:#222"></div>
<div class="a" style="left:395px;top:171px;width:1px;height:4px;background:#222"></div>
<div class="a" style="left:500px;top:171px;width:1px;height:4px;background:#222"></div>
<div class="a" style="left:553px;top:171px;width:1px;height:4px;background:#222"></div>
<div class="a" style="left:605px;top:171px;width:1px;height:4px;background:#222"></div>
<div class="a" style="left:447px;top:171px;width:1px;height:14px;background:#222"></div>
<div class="a" style="left:658px;top:171px;width:1px;height:14px;background:#222"></div>
<div class="t" style="top:176px;font:normal normal 9px/1 'Liberation Sans',sans-serif;color:#000;left:321px;width:40px;text-align:center;">12:00</div>
<div class="t" style="top:176px;font:normal normal 9px/1 'Liberation Sans',sans-serif;color:#000;left:374px;width:40px;text-align:center;">18:00</div>
<div class="t" style="top:176px;font:normal normal 9px/1 'Liberation Sans',sans-serif;color:#000;left:479px;width:40px;text-align:center;">06:00</div>
<div class="t" style="top:176px;font:normal normal 9px/1 'Liberation Sans',sans-serif;color:#000;left:532px;width:40px;text-align:center;">12:00</div>
<div class="t" style="top:176px;font:normal normal 9px/1 'Liberation Sans',sans-serif;color:#000;left:584px;width:40px;text-align:center;">18:00</div>
<div class="t" style="left:410px;top:186px;font:bold 9.8px/1 'Liberation Sans',sans-serif;letter-spacing:0.5px;-webkit-text-stroke:0.3px #000">29-04-10 00:00</div>
<div class="t" style="left:620px;top:186px;font:bold 9.8px/1 'Liberation Sans',sans-serif;letter-spacing:0.5px;-webkit-text-stroke:0.3px #000">30-04-10 00:00</div>
<div class="xpbtn" style="left:761px;top:178px;width:95px;height:23px;box-shadow:inset 0 1px 0 #CEE0FA,inset 0 2px 0 #E0ECFC,inset 1px 0 0 #B8D0F8,inset -1px 0 0 #A8C0F0,inset 0 -1px 0 #6A90E0,inset 0 -2px 0 #9CB8F0"></div>
<div class="t" style="top:185px;font:normal normal 11px/1 'Liberation Sans',sans-serif;color:#000;left:761px;width:95px;text-align:center;">Refresh</div>
<div class="t" style="top:210px;font:normal normal 11px/1 'Liberation Sans',sans-serif;color:#000;letter-spacing:-0.2px;left:258px;">Selected samples: 24558 (AVG every 1 sample)</div>
<div class="t" style="top:210px;font:normal normal 11px/1 'Liberation Sans',sans-serif;color:#000;letter-spacing:-0.15px;right:15px;text-align:right;">Last selected Log contains 154032 measurements</div>
<div class="hdr" style="left:245px;top:227px;width:632px;height:18px"><span style="top:5px">Report: &nbsp;Device 1250P1025 » Production Hall » 2010-04-28 16:35</span></div>
<div class="a" style="left:245px;top:273px;width:630px;height:196px;border:1px solid #919B9C;border-left-color:#8A9AA6;background:#ECE9D8"></div>
<div class="a" style="left:246px;top:274px;width:628px;height:194px;border-right:1px solid #fff;border-bottom:1px solid #fff"></div>
<div class="a" style="left:246px;top:274px;width:627px;height:166px;background:#FCFCFE"></div>
<div class="a" style="left:306px;top:254px;width:59px;height:19px;border:1px solid #919B9C;border-bottom:none;border-radius:3px 3px 0 0;background:linear-gradient(#fff,#F0EFEA)"></div>
<div class="a" style="left:245px;top:252px;width:62px;height:23px;border:1px solid #919B9C;border-bottom:none;border-radius:3px 3px 0 0;background:#FCFCFE"></div>
<div class="a" style="left:246px;top:252px;width:60px;height:3px;border-radius:2px 2px 0 0;background:linear-gradient(#E68B2C,#FFC73C)"></div>
<svg class="a" style="left:251px;top:255px" width="16" height="16"><rect x="0" y="0" width="16" height="3" fill="#1E4E9E"/><rect x="0" y="3" width="16" height="13" fill="#EDEDED"/><rect x="0" y="5.6" width="16" height=".8" fill="#B8B8B8"/><rect x="0" y="8.2" width="16" height=".8" fill="#B8B8B8"/><rect x="0" y="10.8" width="16" height=".8" fill="#B8B8B8"/><rect x="0" y="13.4" width="16" height=".8" fill="#B8B8B8"/><rect x="0" y="16.0" width="16" height=".8" fill="#B8B8B8"/><rect x="5" y="3" width=".8" height="13" fill="#B8B8B8"/><rect x="10.5" y="3" width=".8" height="13" fill="#B8B8B8"/><rect x="0" y="3" width=".8" height="13" fill="#B8B8B8"/><rect x="15.2" y="3" width=".8" height="13" fill="#B8B8B8"/></svg>
<div class="t" style="top:258px;font:normal normal 11px/1 'Liberation Sans',sans-serif;color:#000;letter-spacing:-0.2px;left:270px;">Table</div>
<svg class="a" style="left:311px;top:256px" width="16" height="16"><rect x="0" y="0" width="16" height="16" fill="#C4E6FC"/><rect x="3.2" y="0" width=".5" height="16" fill="#A4C4E0"/><rect x="0" y="3.2" width="16" height=".5" fill="#A4C4E0"/><rect x="6.4" y="0" width=".5" height="16" fill="#A4C4E0"/><rect x="0" y="6.4" width="16" height=".5" fill="#A4C4E0"/><rect x="9.6" y="0" width=".5" height="16" fill="#A4C4E0"/><rect x="0" y="9.6" width="16" height=".5" fill="#A4C4E0"/><rect x="12.8" y="0" width=".5" height="16" fill="#A4C4E0"/><rect x="0" y="12.8" width="16" height=".5" fill="#A4C4E0"/><polyline points="0.5,15 3,12 5,13.5 7,9 9,11 11,6 13,8 15.5,1" stroke="#F8A820" stroke-width="1" fill="none"/></svg>
<div class="t" style="top:259px;font:normal normal 11px/1 'Liberation Sans',sans-serif;color:#000;letter-spacing:-0.3px;left:330px;">Graph</div>
<div class="a" style="left:247px;top:276px;width:625px;height:164px;border:1px solid #7A7A70;border-top-width:2px;border-left-width:2px;border-right-color:#fff;border-bottom-color:#fff;background:#fff"></div>
<div class="a" style="left:249px;top:278px;width:604px;height:17px;background:linear-gradient(#F0EDE0,#EBE8D8);border-top:1px solid #fff;border-left:1px solid #fff;border-bottom:1px solid #DCD8C4"></div>
<div class="a" style="left:249px;top:295px;width:604px;height:1px;background:#000"></div>
<div class="a" style="left:299px;top:278px;width:1px;height:17px;background:#000"></div>
<div class="a" style="left:300px;top:278px;width:1px;height:17px;background:#fff"></div>
<div class="a" style="left:425px;top:278px;width:1px;height:17px;background:#000"></div>
<div class="a" style="left:426px;top:278px;width:1px;height:17px;background:#fff"></div>
<div class="a" style="left:585px;top:278px;width:1px;height:17px;background:#000"></div>
<div class="a" style="left:586px;top:278px;width:1px;height:17px;background:#fff"></div>
<div class="a" style="left:724px;top:278px;width:1px;height:17px;background:#000"></div>
<div class="a" style="left:725px;top:278px;width:1px;height:17px;background:#fff"></div>
<div class="a" style="left:853px;top:278px;width:1px;height:17px;background:#000"></div>
<div class="a" style="left:854px;top:278px;width:1px;height:17px;background:#fff"></div>
<div class="t" style="top:282px;font:normal normal 11px/1 'Liberation Sans',sans-serif;color:#000;right:588px;text-align:right;">No</div>
<div class="t" style="top:282px;font:normal normal 11px/1 'Liberation Sans',sans-serif;color:#000;left:301px;">Date and time</div>
<div class="t" style="top:282px;font:normal normal 11px/1 'Liberation Sans',sans-serif;color:#000;left:427px;">Cold store's humidity [%RH] (1)</div>
<div class="t" style="top:282px;font:normal normal 11px/1 'Liberation Sans',sans-serif;color:#000;letter-spacing:-0.1px;left:587px;">Line engine's voltage [V] (2)</div>
<div class="t" style="top:282px;font:normal normal 11px/1 'Liberation Sans',sans-serif;color:#000;letter-spacing:-0.1px;left:726px;">Liquid's pressure [Bar] (3)</div>
<div class="a" style="left:249px;top:296px;width:604px;height:18px;background:#EEF3FC;border-bottom:1px solid #CCCCCC"></div>
<div class="a" style="left:299px;top:296px;width:1px;height:18px;background:#CCCCCC"></div>
<div class="a" style="left:425px;top:296px;width:1px;height:18px;background:#CCCCCC"></div>
<div class="a" style="left:585px;top:296px;width:1px;height:18px;background:#CCCCCC"></div>
<div class="a" style="left:724px;top:296px;width:1px;height:18px;background:#CCCCCC"></div>
<div class="t" style="top:300px;font:normal normal 11px/1 'Liberation Sans',sans-serif;color:#000;right:585px;text-align:right;">152607</div>
<div class="t" style="top:300px;font:normal normal 11px/1 'Liberation Sans',sans-serif;color:#000;left:299px;width:126px;text-align:center;">2010-04-30 14:09:51.5</div>
<div class="t" style="top:300px;font:normal normal 11px/1 'Liberation Sans',sans-serif;color:#000;right:299px;text-align:right;">41,367</div>
<div class="t" style="top:300px;font:normal normal 11px/1 'Liberation Sans',sans-serif;color:#000;right:161px;text-align:right;">3,000</div>
<div class="t" style="top:300px;font:normal normal 11px/1 'Liberation Sans',sans-serif;color:#000;right:31px;text-align:right;">6,483</div>
<div class="a" style="left:249px;top:314px;width:604px;height:18px;background:#fff;border-bottom:1px solid #CCCCCC"></div>
<div class="a" style="left:299px;top:314px;width:1px;height:18px;background:#CCCCCC"></div>
<div class="a" style="left:425px;top:314px;width:1px;height:18px;background:#CCCCCC"></div>
<div class="a" style="left:585px;top:314px;width:1px;height:18px;background:#CCCCCC"></div>
<div class="a" style="left:724px;top:314px;width:1px;height:18px;background:#CCCCCC"></div>
<div class="t" style="top:318px;font:normal normal 11px/1 'Liberation Sans',sans-serif;color:#000;right:585px;text-align:right;">152608</div>
<div class="t" style="top:318px;font:normal normal 11px/1 'Liberation Sans',sans-serif;color:#000;left:299px;width:126px;text-align:center;">2010-04-30 14:09:52.5</div>
<div class="t" style="top:318px;font:normal normal 11px/1 'Liberation Sans',sans-serif;color:#000;right:299px;text-align:right;">48,658</div>
<div class="t" style="top:318px;font:normal normal 11px/1 'Liberation Sans',sans-serif;color:#000;right:161px;text-align:right;">3,000</div>
<div class="t" style="top:318px;font:normal normal 11px/1 'Liberation Sans',sans-serif;color:#000;right:31px;text-align:right;">[LO] 4,900</div>
<div class="a" style="left:249px;top:332px;width:604px;height:18px;background:#EEF3FC;border-bottom:1px solid #CCCCCC"></div>
<div class="a" style="left:299px;top:332px;width:1px;height:18px;background:#CCCCCC"></div>
<div class="a" style="left:425px;top:332px;width:1px;height:18px;background:#CCCCCC"></div>
<div class="a" style="left:585px;top:332px;width:1px;height:18px;background:#CCCCCC"></div>
<div class="a" style="left:724px;top:332px;width:1px;height:18px;background:#CCCCCC"></div>
<div class="t" style="top:336px;font:normal normal 11px/1 'Liberation Sans',sans-serif;color:#000;right:585px;text-align:right;">152609</div>
<div class="t" style="top:336px;font:normal normal 11px/1 'Liberation Sans',sans-serif;color:#000;left:299px;width:126px;text-align:center;">2010-04-30 14:09:53.5</div>
<div class="t" style="top:336px;font:normal normal 11px/1 'Liberation Sans',sans-serif;color:#000;right:299px;text-align:right;">56,925</div>
<div class="t" style="top:336px;font:normal normal 11px/1 'Liberation Sans',sans-serif;color:#000;right:161px;text-align:right;">3,000</div>
<div class="t" style="top:336px;font:normal normal 11px/1 'Liberation Sans',sans-serif;color:#000;right:31px;text-align:right;">[LO] 3,317</div>
<div class="a" style="left:249px;top:350px;width:604px;height:18px;background:#fff;border-bottom:1px solid #CCCCCC"></div>
<div class="a" style="left:299px;top:350px;width:1px;height:18px;background:#CCCCCC"></div>
<div class="a" style="left:425px;top:350px;width:1px;height:18px;background:#CCCCCC"></div>
<div class="a" style="left:585px;top:350px;width:1px;height:18px;background:#CCCCCC"></div>
<div class="a" style="left:724px;top:350px;width:1px;height:18px;background:#CCCCCC"></div>
<div class="t" style="top:354px;font:normal normal 11px/1 'Liberation Sans',sans-serif;color:#000;right:585px;text-align:right;">152610</div>
<div class="t" style="top:354px;font:normal normal 11px/1 'Liberation Sans',sans-serif;color:#000;left:299px;width:126px;text-align:center;">2010-04-30 14:09:53.7</div>
<div class="t" style="top:354px;font:normal normal 11px/1 'Liberation Sans',sans-serif;color:#000;right:299px;text-align:right;">66,179</div>
<div class="t" style="top:354px;font:normal normal 11px/1 'Liberation Sans',sans-serif;color:#000;right:161px;text-align:right;">22,000</div>
<div class="t" style="top:354px;font:normal normal 11px/1 'Liberation Sans',sans-serif;color:#000;right:31px;text-align:right;">5,138</div>
<div class="a" style="left:249px;top:368px;width:604px;height:18px;background:#EEF3FC;border-bottom:1px solid #CCCCCC"></div>
<div class="a" style="left:299px;top:368px;width:1px;height:18px;background:#CCCCCC"></div>
<div class="a" style="left:425px;top:368px;width:1px;height:18px;background:#CCCCCC"></div>
<div class="a" style="left:585px;top:368px;width:1px;height:18px;background:#CCCCCC"></div>
<div class="a" style="left:724px;top:368px;width:1px;height:18px;background:#CCCCCC"></div>
<div class="t" style="top:372px;font:normal normal 11px/1 'Liberation Sans',sans-serif;color:#000;right:585px;text-align:right;">152611</div>
<div class="t" style="top:372px;font:normal normal 11px/1 'Liberation Sans',sans-serif;color:#000;left:299px;width:126px;text-align:center;">2010-04-30 14:09:54.7</div>
<div class="t" style="top:372px;font:normal normal 11px/1 'Liberation Sans',sans-serif;color:#000;right:299px;text-align:right;">74,540</div>
<div class="t" style="top:372px;font:normal normal 11px/1 'Liberation Sans',sans-serif;color:#000;right:161px;text-align:right;">22,000</div>
<div class="t" style="top:372px;font:normal normal 11px/1 'Liberation Sans',sans-serif;color:#000;right:31px;text-align:right;">7,750</div>
<div class="a" style="left:249px;top:386px;width:604px;height:18px;background:#fff;border-bottom:1px solid #CCCCCC"></div>
<div class="a" style="left:299px;top:386px;width:1px;height:18px;background:#CCCCCC"></div>
<div class="a" style="left:425px;top:386px;width:1px;height:18px;background:#CCCCCC"></div>
<div class="a" style="left:585px;top:386px;width:1px;height:18px;background:#CCCCCC"></div>
<div class="a" style="left:724px;top:386px;width:1px;height:18px;background:#CCCCCC"></div>
<div class="t" style="top:390px;font:normal normal 11px/1 'Liberation Sans',sans-serif;color:#000;right:585px;text-align:right;">152612</div>
<div class="t" style="top:390px;font:normal normal 11px/1 'Liberation Sans',sans-serif;color:#000;left:299px;width:126px;text-align:center;">2010-04-30 14:09:55.7</div>
<div class="t" style="top:390px;font:normal normal 11px/1 'Liberation Sans',sans-serif;color:#000;right:299px;text-align:right;">[HI] 81,018</div>
<div class="t" style="top:390px;font:normal normal 11px/1 'Liberation Sans',sans-serif;color:#000;right:161px;text-align:right;">22,000</div>
<div class="t" style="top:390px;font:normal normal 11px/1 'Liberation Sans',sans-serif;color:#000;right:31px;text-align:right;">10,363</div>
<div class="a" style="left:249px;top:404px;width:604px;height:18px;background:#EEF3FC;border-bottom:1px solid #CCCCCC"></div>
<div class="a" style="left:299px;top:404px;width:1px;height:18px;background:#CCCCCC"></div>
<div class="a" style="left:425px;top:404px;width:1px;height:18px;background:#CCCCCC"></div>
<div class="a" style="left:585px;top:404px;width:1px;height:18px;background:#CCCCCC"></div>
<div class="a" style="left:724px;top:404px;width:1px;height:18px;background:#CCCCCC"></div>
<div class="t" style="top:408px;font:normal normal 11px/1 'Liberation Sans',sans-serif;color:#000;right:585px;text-align:right;">152613</div>
<div class="t" style="top:408px;font:normal normal 11px/1 'Liberation Sans',sans-serif;color:#000;left:299px;width:126px;text-align:center;">2010-04-30 14:09:56.7</div>
<div class="t" style="top:408px;font:normal normal 11px/1 'Liberation Sans',sans-serif;color:#000;right:299px;text-align:right;">[HI] 84,849</div>
<div class="t" style="top:408px;font:normal normal 11px/1 'Liberation Sans',sans-serif;color:#000;right:161px;text-align:right;">22,000</div>
<div class="t" style="top:408px;font:normal normal 11px/1 'Liberation Sans',sans-serif;color:#000;right:31px;text-align:right;">12,975</div>
<div class="a" style="left:854px;top:278px;width:17px;height:145px;background:linear-gradient(90deg,#F0F0EA,#FCFCF8 50%,#EEEDE6)"></div>
<div class="sarrow" style="left:855px;top:279px;width:15px;height:16px"></div>
<svg class="a" style="left:855px;top:279px" width="15" height="16"><path d="M4 10 L7.5 6.5 L11 10" stroke="#4D6185" stroke-width="2" fill="none"/></svg>
<div class="sarrow" style="left:855px;top:406px;width:15px;height:16px"></div>
<svg class="a" style="left:855px;top:406px" width="15" height="16"><path d="M4 6 L7.5 9.5 L11 6" stroke="#4D6185" stroke-width="2" fill="none"/></svg>
<div class="sarrow" style="left:855px;top:329px;width:15px;height:7px"></div>
<div class="a" style="left:249px;top:422px;width:604px;height:17px;background:linear-gradient(#EFEDE6,#FDFDF9 80%,#FBFBF6 90%,#E6E3D6 94%,#E6E3D6)"></div>
<div class="a" style="left:853px;top:423px;width:18px;height:16px;background:#ECE9D8"></div>
<div class="sarrow" style="left:250px;top:423px;width:15px;height:16px"></div>
<svg class="a" style="left:250px;top:423px" width="15" height="16"><path d="M9 4.5 L5.5 8 L9 11.5" stroke="#4D6185" stroke-width="2" fill="none"/></svg>
<div class="sarrow" style="left:267px;top:423px;width:16px;height:16px"></div>
<svg class="a" style="left:267px;top:423px" width="16" height="16"><rect x="5" y="5" width="1" height="6" fill="#A0B4E0"/><rect x="7" y="5" width="1" height="6" fill="#A0B4E0"/><rect x="9" y="5" width="1" height="6" fill="#A0B4E0"/><rect x="11" y="5" width="1" height="6" fill="#A0B4E0"/></svg>
<div class="sarrow" style="left:838px;top:423px;width:15px;height:16px"></div>
<svg class="a" style="left:838px;top:423px" width="15" height="16"><path d="M6 4.5 L9.5 8 L6 11.5" stroke="#4D6185" stroke-width="2" fill="none"/></svg>
<div class="xpbtn" style="left:775px;top:443px;width:96px;height:23px"></div>
<div class="t" style="top:450px;font:normal normal 11px/1 'Liberation Sans',sans-serif;color:#000;letter-spacing:0.3px;left:775px;width:96px;text-align:center;"><u>E</u>xport to file...</div>
<div class="a" style="left:4px;top:479px;width:874px;height:1px;background:#fff"></div>
<div class="a" style="left:4px;top:479px;width:1px;height:81px;background:#fff"></div>
<div class="hdr lo" style="left:5px;top:480px;width:872px;height:18px"><span>Event log</span></div>
<div class="a" style="left:5px;top:498px;width:872px;height:62px;border:1px solid #7F9DB9;border-top-color:#fff;background:#fff"></div>
<div class="a" style="left:6px;top:500px;width:870px;height:19px;background:linear-gradient(#EEEBDC,#E8E4D2);border-bottom:2px solid #D0CCBC"></div>
<div class="a" style="left:137px;top:503px;width:1px;height:13px;background:#C8C4B4"></div>
<div class="a" style="left:205px;top:503px;width:1px;height:13px;background:#C8C4B4"></div>
<div class="a" style="left:372px;top:503px;width:1px;height:13px;background:#C8C4B4"></div>
<div class="t" style="top:505px;font:normal normal 11px/1 'Liberation Sans',sans-serif;color:#000;left:12px;">Time</div>
<div class="t" style="top:505px;font:normal normal 11px/1 'Liberation Sans',sans-serif;color:#000;left:142px;">Category</div>
<div class="t" style="top:505px;font:normal normal 11px/1 'Liberation Sans',sans-serif;color:#000;left:210px;">Description</div>
<div class="t" style="top:523px;font:normal normal 11px/1 'Liberation Sans',sans-serif;color:#000;left:28px;">2010-05-25 11:12:35</div>
<div class="t" style="top:523px;font:normal normal 11px/1 'Liberation Sans',sans-serif;color:#000;left:140px;">Information</div>
<div class="t" style="top:523px;font:normal normal 11px/1 'Liberation Sans',sans-serif;color:#000;left:208px;">Data import has been completed</div>
<div class="t" style="top:541px;font:normal normal 11px/1 'Liberation Sans',sans-serif;color:#000;left:28px;">2010-05-25 11:12:31</div>
<div class="t" style="top:541px;font:normal normal 11px/1 'Liberation Sans',sans-serif;color:#000;left:140px;">Information</div>
<div class="t" style="top:541px;font:normal normal 11px/1 'Liberation Sans',sans-serif;color:#000;left:208px;">Data import has been started</div>
<div class="a" style="left:4px;top:560px;width:874px;height:20px;background:#ECE9D8;border-top:2px solid #ACA899;border-right:1px solid #fff;border-bottom:1px solid #fff"></div>
<div class="a" style="left:5px;top:562px;width:63px;height:17px;border:1px solid #1F4A7F;border-radius:3px;background:linear-gradient(#EEEDE8,#E2E0D8)"></div>
<div class="t" style="top:566px;font:normal normal 11px/1 'Liberation Sans',sans-serif;color:#000;letter-spacing:-0.4px;left:5px;width:63px;text-align:center;"><u>S</u>how Log</div>
<div class="a" style="left:71px;top:562px;width:1px;height:16px;background:#C8C4B0"></div>
<svg class="a" style="left:864px;top:566px" width="13" height="13"><path d="M12 1 L1 12 M12 5 L5 12 M12 9 L9 12" stroke="#A8A494" stroke-width="1.4"/><path d="M11 1 L0 12 M11 5 L4 12 M11 9 L8 12" stroke="#fff" stroke-width="1"/></svg>
</body></html>
